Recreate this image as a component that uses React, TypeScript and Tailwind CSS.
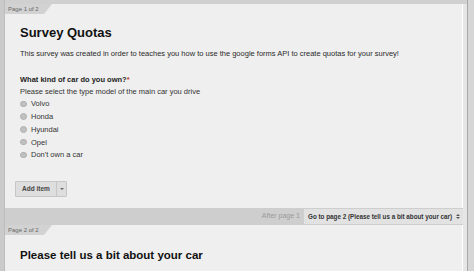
import React from 'react';

const options = ['Volvo', 'Honda', 'Hyundai', 'Opel', "Don't own a car"];

const PageTab = ({ label }: { label: string }) => (
  <div className="h-[10px] w-[47px] bg-[#d2d2d2] pl-[3px] text-[6px] leading-[10px] text-[#666] [clip-path:polygon(0_0,100%_0,calc(100%-8px)_100%,0_100%)]">
    {label}
  </div>
);

export default function App() {
  return (
    <div className="flex h-[271px] w-[474px] overflow-hidden bg-[#d0d0d0] font-['Liberation_Sans',Arial,sans-serif]">
      {/* left gutter */}
      <div className="w-[5px] shrink-0 border-r border-[#bdbdbd] bg-[#cacaca]" />

      <div className="flex w-[458px] shrink-0 flex-col pt-[4px]">
        {/* page 1 */}
        <div className="h-[204px] border-r border-white bg-[#efefef]">
          <PageTab label="Page 1 of 2" />
          <h1 className="mt-[11px] pl-[15px] text-[13px] font-bold leading-[15px] text-[#111]">Survey Quotas</h1>
          <p className="mt-[9px] pl-[15px] text-[7.5px] leading-[10px] text-[#2a2a2a]">
            This survey was created in order to teaches you how to use the google forms API to create quotas for your survey!
          </p>
          <div className="mt-[16px] pl-[15px] text-[7.5px] font-bold leading-[10px] text-[#222]">
            What kind of car do you own?<span className="text-[#c53929]">*</span>
          </div>
          <div className="mt-[2px] pl-[15px] text-[7.5px] leading-[10px] text-[#333]">
            Please select the type model of the main car you drive
          </div>
          <div className="mt-[0.5px] flex flex-col pl-[15px]">
            {options.map(o => (
              <div key={o} className="flex h-[12.75px] items-center">
                <span className="h-[6.5px] w-[6.5px] rounded-full border border-[#b0b0b0] bg-[#c0c0c0]" />
                <span className="ml-[4.5px] text-[7.5px] text-[#333]">{o}</span>
              </div>
            ))}
          </div>
          <div className="ml-[10px] mt-[19.5px] flex h-[16px] w-[52px] items-stretch rounded-[1px] border border-[#c6c6c6] bg-[#dedede]">
            <div className="flex flex-1 items-center justify-center border-r border-[#c6c6c6] text-[6.5px] font-bold text-[#444]">
              Add item
            </div>
            <div className="flex w-[9px] items-center justify-center">
              <span className="h-0 w-0 border-x-[2px] border-t-[2px] border-x-transparent border-t-[#666]" />
            </div>
          </div>
        </div>

        {/* page break bar */}
        <div className="flex h-[17px] items-center justify-end bg-[#cecece]">
          <span className="mr-[4px] text-[7px] text-[#9a9a9a]">After page 1</span>
          <div className="flex h-[15px] w-[159px] items-center justify-between bg-[#e2e2e2] pl-[4px] pr-[3px]">
            <span className="text-[6.3px] font-bold text-[#333]">Go to page 2 (Please tell us a bit about your car)</span>
            <span className="flex flex-col gap-[1px]">
              <span className="h-0 w-0 border-x-[2px] border-b-[2px] border-x-transparent border-b-[#555]" />
              <span className="h-0 w-0 border-x-[2px] border-t-[2px] border-x-transparent border-t-[#555]" />
            </span>
          </div>
        </div>

        {/* page 2 */}
        <div className="flex-1 border-r border-white bg-[#efefef]">
          <PageTab label="Page 2 of 2" />
          <h2 className="mt-[13px] pl-[15px] text-[11.5px] font-bold leading-[14px] text-[#111]">
            Please tell us a bit about your car
          </h2>
        </div>
      </div>

      {/* right gutter */}
      <div className="flex shrink-0 pt-[4px]">
        <div className="w-[4px] bg-[#e6e6e6]" />
      </div>
      <div className="w-[1px] shrink-0 bg-[#a8a8a8]" />
      <div className="flex-1 bg-[#d6d6d6]" />
    </div>
  );
}
